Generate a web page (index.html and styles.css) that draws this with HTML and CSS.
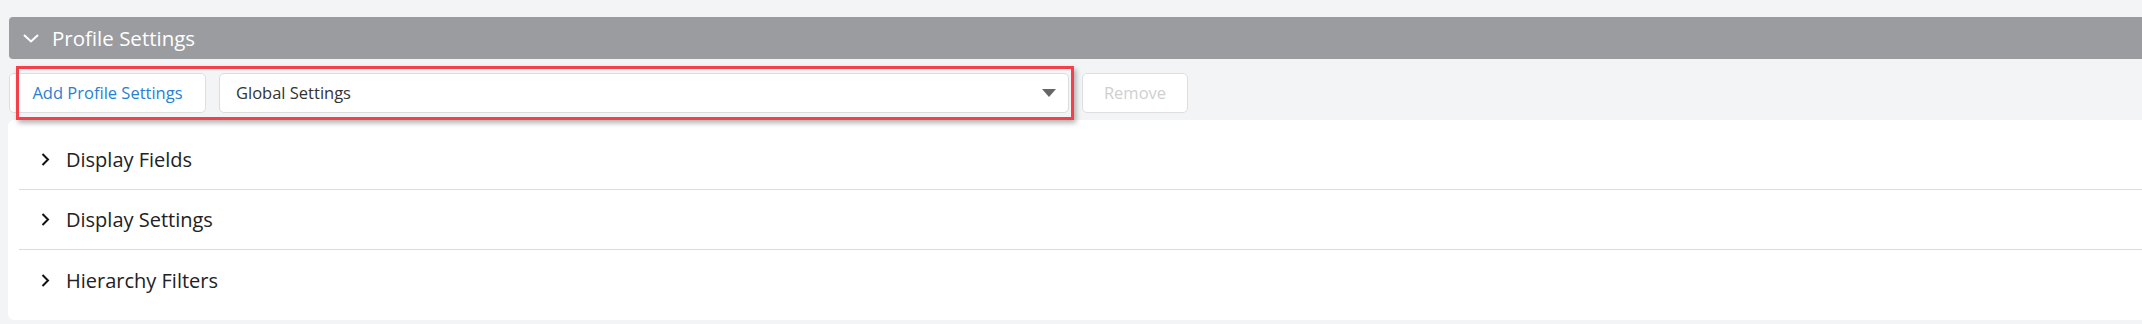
FILE: index.html
```html
<!DOCTYPE html>
<html lang="en">
<head>
  <meta charset="UTF-8" />
  <title>Profile Settings</title>
  <link rel="stylesheet" href="styles.css">
</head>
<body>
  <section class="settings">
    <div class="section-head">
      <svg class="chev-down" width="16" height="9" viewBox="0 0 16 9"><path d="M1 1l7 6.5L15 1" /></svg>
      <span>Profile Settings</span>
    </div>

    <div class="toolbar">
      <button class="btn btn-add">Add Profile Settings</button>
      <div class="select">
        <span>Global Settings</span>
        <span class="caret"></span>
      </div>
      <button class="btn btn-remove" disabled>Remove</button>
      <div class="highlight"></div>
    </div>

    <div class="panel">
      <div class="row">
        <svg class="chev-right" width="9" height="13" viewBox="0 0 9 13"><path d="M1.5 1l5.5 5.5L1.5 12" /></svg>
        <span>Display Fields</span>
      </div>
      <div class="row">
        <svg class="chev-right" width="9" height="13" viewBox="0 0 9 13"><path d="M1.5 1l5.5 5.5L1.5 12" /></svg>
        <span>Display Settings</span>
      </div>
      <div class="row">
        <svg class="chev-right" width="9" height="13" viewBox="0 0 9 13"><path d="M1.5 1l5.5 5.5L1.5 12" /></svg>
        <span>Hierarchy Filters</span>
      </div>
    </div>
  </section>
</body>
</html>
```

FILE: styles.css
```css
:root {
  --page: #f3f4f6;
  --head: #9b9ca0;
  --card: #ffffff;
  --text: #222;
  --link: #2880d4;
  --line: #dcdcdc;
  --mark: #f3404a;
}

body {
  font-family: 'Open Sans', 'Noto Sans', sans-serif;
  background-color: var(--page);
  margin: 0;
  overflow: hidden;
}

.settings {
  padding-top: 17px;
  width: 2160px;
}

.section-head {
  display: flex;
  align-items: center;
  gap: 13px;
  height: 42px;
  margin-left: 9px;
  padding-left: 14px;
  background-color: var(--head);
  color: white;
  font-size: 20.5px;
  border-radius: 4px 0 0 4px;
}

.chev-down path {
  fill: none;
  stroke: white;
  stroke-width: 2;
}

.toolbar {
  position: relative;
  display: flex;
  align-items: center;
  gap: 13px;
  height: 61px;
  padding-left: 9px;
}

.btn {
  height: 40px;
  margin-top: 6px;
  padding: 0;
  background: var(--card);
  border: 1px solid #dedede;
  border-radius: 5px;
  font-family: inherit;
  font-size: 16.5px;
}

.btn-add {
  width: 197px;
  color: var(--link);
}

.btn-remove {
  width: 106px;
  color: #cfcfcf;
}

.select {
  display: flex;
  align-items: center;
  justify-content: space-between;
  box-sizing: border-box;
  width: 850px;
  height: 40px;
  margin-top: 6px;
  padding: 0 12px 0 16px;
  background: var(--card);
  border: 1px solid #dcdcdc;
  border-radius: 5px;
  font-size: 16.5px;
  color: #333;
}

.caret {
  width: 0;
  height: 0;
  border-left: 7px solid transparent;
  border-right: 7px solid transparent;
  border-top: 8px solid #666;
}

.highlight {
  position: absolute;
  left: 16px;
  top: 7px;
  box-sizing: border-box;
  width: 1058px;
  height: 54px;
  border: 3px solid var(--mark);
  box-shadow: 2px 3px 5px rgba(0, 0, 0, 0.3);
  pointer-events: none;
}

.panel {
  margin-left: 8px;
  padding: 10px 0 10px 11px;
  background: var(--card);
  border-radius: 6px;
}

.row {
  display: flex;
  align-items: center;
  gap: 16px;
  height: 59px;
  padding-left: 22px;
  border-bottom: 1px solid var(--line);
  color: var(--text);
  font-size: 20px;
}

.row:last-child {
  border-bottom: none;
  height: 60px;
}

.chev-right path {
  fill: none;
  stroke: #111;
  stroke-width: 2;
}
```
